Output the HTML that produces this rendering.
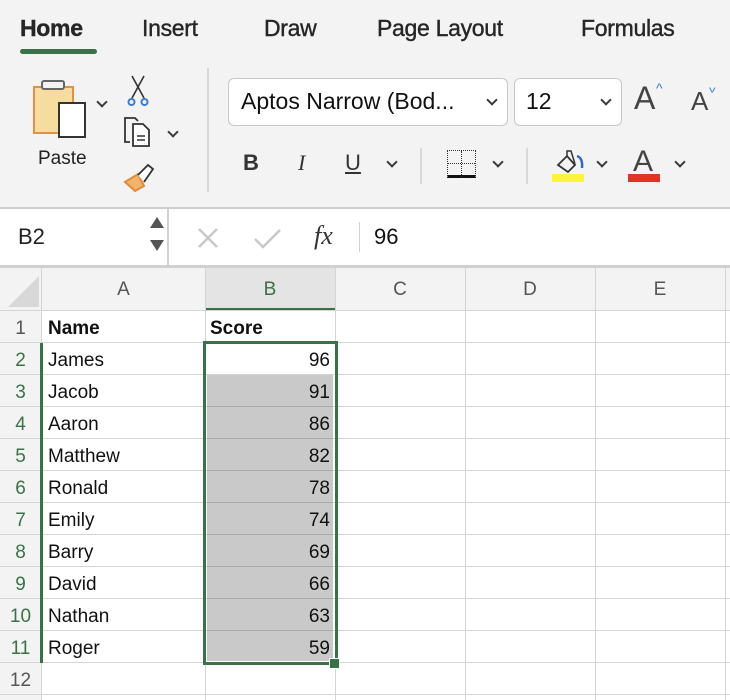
<!DOCTYPE html>
<html><head><meta charset="utf-8"><style>
*{margin:0;padding:0;box-sizing:border-box}
body{width:730px;height:700px;overflow:hidden;background:#fff;font-family:"Liberation Sans",sans-serif;position:relative;color:#222}
.a{position:absolute}
.tab{position:absolute;top:15px;font-size:23px;color:#262626;letter-spacing:-0.3px;-webkit-text-stroke:0.4px #262626}
.box{position:absolute;background:#fff;border:1px solid #c8c8c8;border-radius:6px}
.chev{position:absolute;width:8px;height:8px;border-right:2.2px solid #3a3a3a;border-bottom:2.2px solid #3a3a3a;transform:rotate(45deg)}
.vl{position:absolute;background:#d4d4d4;width:1px}
.hl{position:absolute;background:#d4d4d4;height:1px}
.ch{position:absolute;top:268px;height:43px;line-height:43px;text-align:center;font-size:19px;color:#555}
.rh{position:absolute;left:0;width:41px;text-align:center;font-size:19px;color:#555;height:32px;line-height:36px}
.c{position:absolute;height:32px;line-height:36px;font-size:19px;color:#111}
</style></head><body>
<div class="a" style="left:0;top:0;width:730px;height:208px;background:#f3f3f3"></div>
<div class="tab" style="left:20px;font-weight:700">Home</div>
<div class="tab" style="left:142px">Insert</div>
<div class="tab" style="left:264px">Draw</div>
<div class="tab" style="left:377px">Page Layout</div>
<div class="tab" style="left:581px">Formulas</div>
<div class="a" style="left:20px;top:49px;width:77px;height:5px;border-radius:3px;background:#3b7148"></div>

<!-- clipboard -->
<div class="a" style="left:33px;top:86px;width:41px;height:48px;background:#f7dca0;border:2px solid #e0904a"></div>
<div class="a" style="left:41px;top:80px;width:24px;height:10px;border:2px solid #666;border-radius:3px;background:#f3f3f3"></div>
<div class="a" style="left:58px;top:102px;width:28px;height:36px;background:#fff;border:2px solid #333"></div>
<div class="chev" style="left:98px;top:98px"></div>
<div class="a" style="left:38px;top:148px;font-size:19px;color:#222">Paste</div>
<svg class="a" style="left:124px;top:74px" width="30" height="34" viewBox="0 0 30 34"><path d="M8 2 L20 24 M20 2 L8 24" stroke="#333" stroke-width="1.6" fill="none"/><circle cx="7.5" cy="28" r="3" stroke="#3b7bd0" stroke-width="2" fill="none"/><circle cx="20.5" cy="28" r="3" stroke="#3b7bd0" stroke-width="2" fill="none"/></svg>
<svg class="a" style="left:122px;top:116px" width="36" height="36" viewBox="0 0 36 36"><path d="M8 26 H3 V2 H13 L16 5" stroke="#333" stroke-width="1.8" fill="none"/><path d="M11 8 H21 L27 14 V30 H11 Z" stroke="#333" stroke-width="1.8" fill="#fff"/><path d="M15 20 H23 M15 24 H23" stroke="#333" stroke-width="1.5"/></svg>
<div class="chev" style="left:169px;top:128px"></div>
<svg class="a" style="left:122px;top:160px" width="36" height="34" viewBox="0 0 36 34"><path d="M3 22 L16 14 L22 26 L13 31 Z" fill="#f2b36d" stroke="#e08a3c" stroke-width="2"/><path d="M16 15 L26 5 L31 9 L22 22" stroke="#333" stroke-width="1.8" fill="#fff"/></svg>
<div class="a" style="left:207px;top:68px;width:2px;height:124px;background:#d8d8d8"></div>

<div class="box" style="left:228px;top:78px;width:280px;height:48px"></div>
<div class="a" style="left:241px;top:88px;font-size:23px;color:#111">Aptos Narrow (Bod...</div>
<div class="chev" style="left:488px;top:96px"></div>
<div class="box" style="left:514px;top:78px;width:108px;height:48px"></div>
<div class="a" style="left:526px;top:88px;font-size:23px;color:#111">12</div>
<div class="chev" style="left:602px;top:96px"></div>
<div class="a" style="left:634px;top:80px;font-size:32px;color:#444;font-weight:300">A</div>
<div class="a" style="left:656px;top:80px;font-size:14px;color:#3b7bd0">^</div>
<div class="a" style="left:691px;top:86px;font-size:26px;color:#444">A</div>
<div class="a" style="left:709px;top:80px;font-size:14px;color:#3b7bd0;transform:scaleY(-1)">^</div>

<div class="a" style="left:243px;top:150px;font-size:22px;font-weight:700;color:#333">B</div>
<div class="a" style="left:298px;top:150px;font-size:22px;font-style:italic;font-family:'Liberation Serif',serif;color:#333">I</div>
<div class="a" style="left:345px;top:150px;font-size:22px;color:#333;text-decoration:underline">U</div>
<div class="chev" style="left:388px;top:158px"></div>
<div class="a" style="left:420px;top:148px;width:2px;height:36px;background:#d8d8d8"></div>
<div class="a" style="left:447px;top:150px;width:29px;height:28px;border:1.5px dotted #333;border-bottom:3px solid #111"></div>
<div class="a" style="left:461px;top:151px;height:26px;border-left:1.5px dotted #333"></div>
<div class="a" style="left:448px;top:163px;width:27px;border-top:1.5px dotted #333"></div>
<div class="chev" style="left:494px;top:158px"></div>
<div class="a" style="left:526px;top:148px;width:2px;height:36px;background:#d8d8d8"></div>
<svg class="a" style="left:555px;top:148px" width="32" height="28" viewBox="0 0 32 28"><path d="M3 17 L12 8 L20 17 L13 24 Z" stroke="#333" stroke-width="1.8" fill="none"/><path d="M12 8 V3 H16 L20 16" stroke="#333" stroke-width="1.5" fill="none"/><path d="M22 8 Q28 10 27 20" stroke="#2e6bbd" stroke-width="2.5" fill="none"/></svg>
<div class="a" style="left:552px;top:174px;width:32px;height:8px;background:#fcf33e"></div>
<div class="chev" style="left:598px;top:158px"></div>
<div class="a" style="left:633px;top:145px;font-size:30px;color:#444;font-weight:300">A</div>
<div class="a" style="left:628px;top:174px;width:32px;height:8px;background:#e33326"></div>
<div class="chev" style="left:676px;top:158px"></div>

<!-- formula bar -->
<div class="a" style="left:0;top:207px;width:730px;height:2px;background:#d0d0d0"></div>
<div class="a" style="left:0;top:265px;width:730px;height:3px;background:#d0d0d0"></div>
<div class="a" style="left:167px;top:209px;width:2px;height:56px;background:#d0d0d0"></div>
<div class="a" style="left:18px;top:224px;font-size:22px;color:#222">B2</div>
<div class="a" style="left:150px;top:217px;width:0;height:0;border-left:7px solid transparent;border-right:7px solid transparent;border-bottom:11px solid #555"></div>
<div class="a" style="left:150px;top:240px;width:0;height:0;border-left:7px solid transparent;border-right:7px solid transparent;border-top:11px solid #555"></div>
<svg class="a" style="left:196px;top:226px" width="26" height="26"><path d="M3 3 L21 21 M21 3 L3 21" stroke="#c8c8c8" stroke-width="2.5"/></svg>
<svg class="a" style="left:252px;top:226px" width="32" height="26"><path d="M3 13 L11 21 L28 4" stroke="#c8c8c8" stroke-width="2.5" fill="none"/></svg>
<div class="a" style="left:314px;top:221px;font-size:26px;font-style:italic;font-family:'Liberation Serif',serif;color:#333">fx</div>
<div class="a" style="left:359px;top:222px;width:1px;height:30px;background:#d0d0d0"></div>
<div class="a" style="left:374px;top:224px;font-size:22px;color:#111">96</div>

<!-- headers -->
<div class="a" style="left:0;top:268px;width:730px;height:43px;background:#f3f3f3"></div>
<div class="a" style="left:0;top:311px;width:41px;height:389px;background:#f3f3f3"></div>
<div class="a" style="left:8px;top:276px;width:0;height:0;border-left:31px solid transparent;border-bottom:31px solid #d8d8d8"></div>
<div class="a" style="left:205px;top:268px;width:130px;height:43px;background:#e4e4e4"></div>
<div class="a" style="left:205px;top:308px;width:130px;height:3px;background:#3b7148"></div>
<div class="ch" style="left:42px;width:163px">A</div>
<div class="ch" style="left:205px;width:130px;color:#3b7148">B</div>
<div class="ch" style="left:335px;width:130px">C</div>
<div class="ch" style="left:465px;width:130px">D</div>
<div class="ch" style="left:595px;width:130px">E</div>

<!-- gridlines -->
<div class="vl" style="left:41px;top:268px;height:432px"></div>
<div class="vl" style="left:205px;top:268px;height:432px"></div>
<div class="vl" style="left:335px;top:268px;height:432px"></div>
<div class="vl" style="left:465px;top:268px;height:432px"></div>
<div class="vl" style="left:595px;top:268px;height:432px"></div>
<div class="vl" style="left:725px;top:268px;height:432px"></div>
<div class="hl" style="left:0;top:310px;width:730px"></div>
<div class="hl" style="left:0;top:342px;width:730px"></div>
<div class="hl" style="left:0;top:374px;width:730px"></div>
<div class="hl" style="left:0;top:406px;width:730px"></div>
<div class="hl" style="left:0;top:438px;width:730px"></div>
<div class="hl" style="left:0;top:470px;width:730px"></div>
<div class="hl" style="left:0;top:502px;width:730px"></div>
<div class="hl" style="left:0;top:534px;width:730px"></div>
<div class="hl" style="left:0;top:566px;width:730px"></div>
<div class="hl" style="left:0;top:598px;width:730px"></div>
<div class="hl" style="left:0;top:630px;width:730px"></div>
<div class="hl" style="left:0;top:662px;width:730px"></div>
<div class="hl" style="left:0;top:694px;width:730px"></div>

<!-- selection fill -->
<div class="a" style="left:207px;top:375px;width:126px;height:286px;background:#c9c9c9"></div>
<div class="hl" style="left:207px;top:406px;width:126px;background:#a9a9a9"></div>
<div class="hl" style="left:207px;top:438px;width:126px;background:#a9a9a9"></div>
<div class="hl" style="left:207px;top:470px;width:126px;background:#a9a9a9"></div>
<div class="hl" style="left:207px;top:502px;width:126px;background:#a9a9a9"></div>
<div class="hl" style="left:207px;top:534px;width:126px;background:#a9a9a9"></div>
<div class="hl" style="left:207px;top:566px;width:126px;background:#a9a9a9"></div>
<div class="hl" style="left:207px;top:598px;width:126px;background:#a9a9a9"></div>
<div class="hl" style="left:207px;top:630px;width:126px;background:#a9a9a9"></div>
<div class="a" style="left:203px;top:341px;width:135px;height:324px;border:3px solid #3b7148"></div>
<div class="a" style="left:329px;top:658px;width:11px;height:11px;background:#3b7148;border:1px solid #fff"></div>
<div class="a" style="left:40px;top:343px;width:3px;height:320px;background:#3b7148"></div>

<!-- row headers -->
<div class="rh" style="top:311px">1</div>
<div class="rh" style="top:343px;color:#3b7148">2</div>
<div class="rh" style="top:375px;color:#3b7148">3</div>
<div class="rh" style="top:407px;color:#3b7148">4</div>
<div class="rh" style="top:439px;color:#3b7148">5</div>
<div class="rh" style="top:471px;color:#3b7148">6</div>
<div class="rh" style="top:503px;color:#3b7148">7</div>
<div class="rh" style="top:535px;color:#3b7148">8</div>
<div class="rh" style="top:567px;color:#3b7148">9</div>
<div class="rh" style="top:599px;color:#3b7148">10</div>
<div class="rh" style="top:631px;color:#3b7148">11</div>
<div class="rh" style="top:663px">12</div>

<!-- cells -->
<div class="c" style="left:48px;top:311px;font-weight:700">Name</div>
<div class="c" style="left:210px;top:311px;font-weight:700">Score</div>
<div class="c" style="left:48px;top:343px">James</div>
<div class="c" style="left:48px;top:375px">Jacob</div>
<div class="c" style="left:48px;top:407px">Aaron</div>
<div class="c" style="left:48px;top:439px">Matthew</div>
<div class="c" style="left:48px;top:471px">Ronald</div>
<div class="c" style="left:48px;top:503px">Emily</div>
<div class="c" style="left:48px;top:535px">Barry</div>
<div class="c" style="left:48px;top:567px">David</div>
<div class="c" style="left:48px;top:599px">Nathan</div>
<div class="c" style="left:48px;top:631px">Roger</div>
<div class="c" style="right:400px;top:343px">96</div>
<div class="c" style="right:400px;top:375px">91</div>
<div class="c" style="right:400px;top:407px">86</div>
<div class="c" style="right:400px;top:439px">82</div>
<div class="c" style="right:400px;top:471px">78</div>
<div class="c" style="right:400px;top:503px">74</div>
<div class="c" style="right:400px;top:535px">69</div>
<div class="c" style="right:400px;top:567px">66</div>
<div class="c" style="right:400px;top:599px">63</div>
<div class="c" style="right:400px;top:631px">59</div>
</body></html>
